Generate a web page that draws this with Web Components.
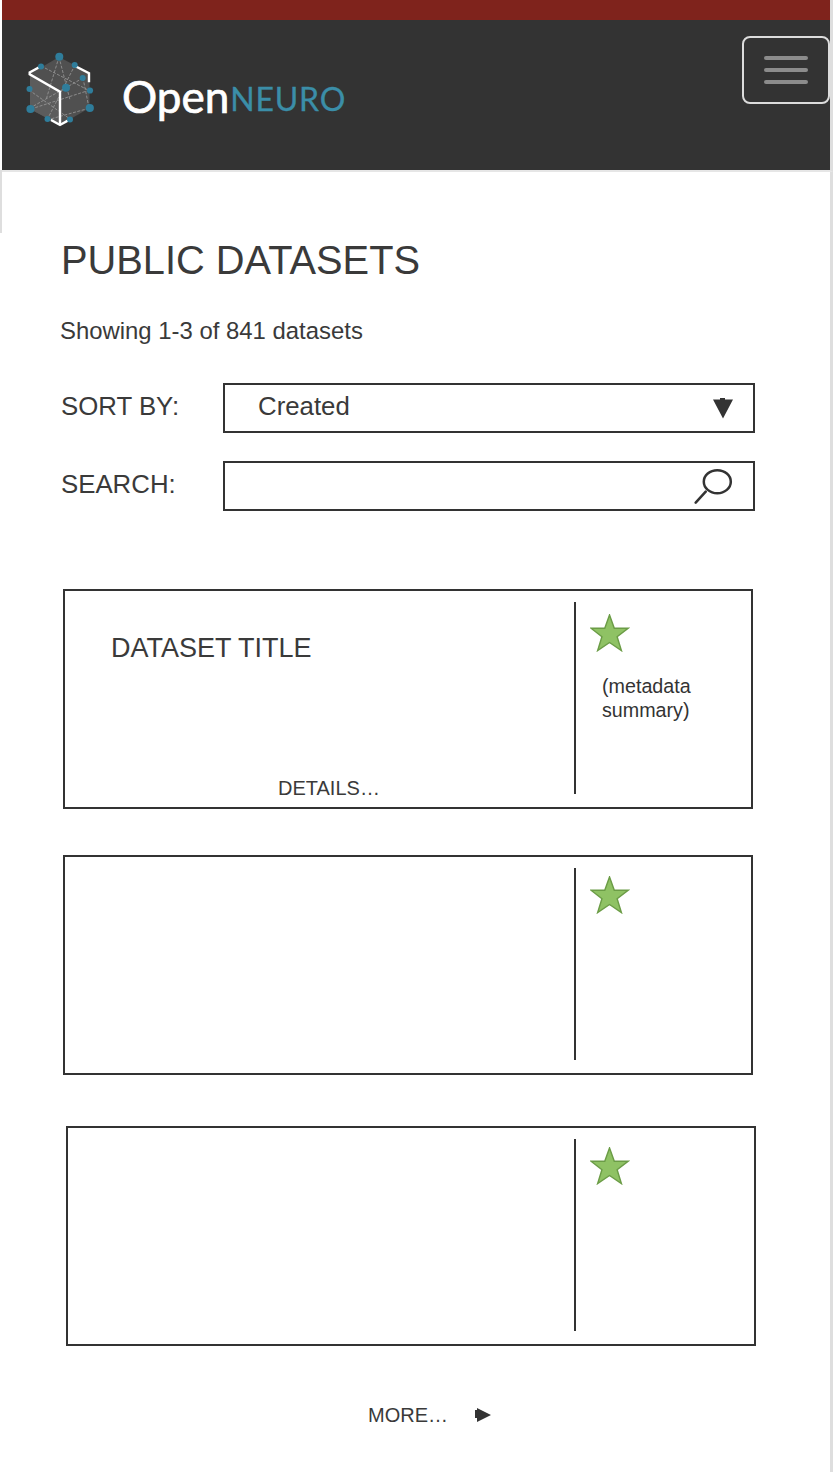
<!DOCTYPE html>
<html lang="en">
<head>
<meta charset="utf-8">
<title>OpenNeuro - Public Datasets</title>
<style>
    html, body { margin: 0; padding: 0; background: #fff; }
    body { font-family: "Liberation Sans", Arial, sans-serif; color: #333; }
</style>
</head>
<body>

<app-header></app-header>
<dataset-page>
    <section-title>PUBLIC DATASETS</section-title>
    <result-count>Showing 1-3 of 841 datasets</result-count>
    <form-row label="SORT BY:" value="Created" icon="caret" class="sort"></form-row>
    <form-row label="SEARCH:" icon="search" class="search"></form-row>
    <dataset-card class="first" title-text="DATASET TITLE" details="DETAILS…">(metadata<br>summary)</dataset-card>
    <dataset-card class="second"></dataset-card>
    <dataset-card class="third"></dataset-card>
    <more-link>MORE…</more-link>
</dataset-page>

<script>
const headerTemplate = document.createElement('template');
headerTemplate.innerHTML = `
    <style>
        :host { display: block; width: 834px; }
        .alert { height: 20px; margin-left: 2px; margin-right: 1px; border-right: 3px solid #dedede; background: #7f231c; }
        .bar {
            display: flex;
            align-items: flex-start;
            justify-content: space-between;
            height: 150px;
            margin-left: 2px;
            margin-right: 1px;
            background: #333;
            border-bottom: 2px solid #e6e6e6;
            border-right: 3px solid #dedede;
        }
        .brand { display: flex; align-items: flex-start; padding: 30px 0 0 23px; }
        .brand svg { display: block; width: 72px; height: 80px; flex: none; }
        .name {
            margin: 20px 0 0 25px;
            font-family: Lato, sans-serif;
            font-size: 44px;
            line-height: 52px;
            color: #fff;
            white-space: nowrap;
            -webkit-text-stroke: 0.7px #fff;
        }
        .name span {
            font-size: 32px;
            color: #3b8ea8;
            letter-spacing: 0.8px;
            margin-left: 1px;
            vertical-align: 2px;
            -webkit-text-stroke: 0.3px #3b8ea8;
        }
        button {
            box-sizing: border-box;
            width: 88px;
            height: 68px;
            margin: 16px 0 0 0;
            padding: 0;
            display: flex;
            flex-direction: column;
            align-items: center;
            justify-content: center;
            gap: 8px;
            background: transparent;
            border: 2px solid #dcdcdc;
            border-radius: 8px;
        }
        button i { display: block; width: 44px; height: 4px; background: #8c8c8c; border-radius: 2px; }
    </style>
    <div class="alert"></div>
    <div class="bar">
        <div class="brand">
            <svg viewBox="25 50 72 80" aria-hidden="true">
                <polygon points="59,57 89.500,73 89.500,108 60,125 30,109 30,74" fill="#505050"/>
                <polygon points="30,74 60,91 60,125 30,109" fill="#5c5c5c"/>
                <g fill="none" stroke="#9a9a9a" stroke-width="0.800" stroke-dasharray="3 1.500">
                    <path d="M59,57 L46,100 M59,57 L70,100 M41,66 L90,91 M75,65 L47,120 M83,78 L30,108 M29,90 L70,119 M31,109 L90,90 M47,120 L90,108 M83,78 L89,108"/>
                </g>
                <g fill="none" stroke="#fff" stroke-width="2.400" stroke-linecap="square" stroke-linejoin="miter">
                    <path d="M38,68 L29.700,72.500 L29.700,74.300 L60,91.700 L60,123"/>
                    <path d="M52,120.500 L60,125 L69,120"/>
                    <path d="M75,66 L89,73.300 L89,81"/>
                </g>
                <g fill="#2f7d9b">
                    <circle cx="59.300" cy="56.700" r="4"/>
                    <circle cx="41" cy="66.500" r="3"/>
                    <circle cx="74.700" cy="65" r="3"/>
                    <circle cx="82.700" cy="78" r="3"/>
                    <circle cx="66" cy="87.700" r="4"/>
                    <circle cx="29.500" cy="89" r="3"/>
                    <circle cx="90" cy="90.500" r="3.100"/>
                    <circle cx="30.500" cy="109" r="4.100"/>
                    <circle cx="89.800" cy="108" r="4.100"/>
                    <circle cx="47.500" cy="119" r="3"/>
                    <circle cx="70" cy="119.500" r="3"/>
                </g>
            </svg>
            <div class="name">Open<span>NEURO</span></div>
        </div>
        <button type="button" aria-label="Menu"><i></i><i></i><i></i></button>
    </div>
`;

class AppHeader extends HTMLElement {
    constructor() {
        super();
        this.attachShadow({mode: 'open'});
        this.shadowRoot.appendChild(headerTemplate.content.cloneNode(true));
    }
}

const pageTemplate = document.createElement('template');
pageTemplate.innerHTML = `
    <style>
        :host {
            display: block;
            box-sizing: border-box;
            width: 834px;
            background: #fff;
        }
        .wrap {
            display: flow-root;
            box-sizing: border-box;
            border-right: 3px solid #dedede;
            margin-right: 1px;
            height: 1300px;
            padding-top: 1px;
        }
        .stub { position: absolute; left: 0; top: 170px; width: 2px; height: 63px; background: #dedede; }
    </style>
    <div class="stub"></div>
    <div class="wrap"><slot></slot></div>
`;

class DatasetPage extends HTMLElement {
    constructor() {
        super();
        this.attachShadow({mode: 'open'});
        this.shadowRoot.appendChild(pageTemplate.content.cloneNode(true));
    }
}

class SectionTitle extends HTMLElement {
    constructor() {
        super();
        this.attachShadow({mode: 'open'});
        this.shadowRoot.innerHTML = `
            <style>
                :host {
                    display: block;
                    margin: 63px 0 0 61px;
                    font-size: 39.800px;
                    line-height: 48px;
                    color: #3a3a3a;
                }
            </style>
            <slot></slot>`;
    }
}

class ResultCount extends HTMLElement {
    constructor() {
        super();
        this.attachShadow({mode: 'open'});
        this.shadowRoot.innerHTML = `
            <style>
                :host {
                    display: block;
                    margin: 32px 0 0 60px;
                    font-size: 23.900px;
                    line-height: 30px;
                    color: #3a3a3a;
                }
            </style>
            <slot></slot>`;
    }
}

const icons = {
    caret: `<svg width="22" height="22" viewBox="0 0 22 22"><path d="M1,2.500 H8 V1 H13 V2.500 H21 L11,21.500 Z" fill="#333"/></svg>`,
    search: `<svg width="40" height="40" viewBox="0 0 40 40"><ellipse cx="23.300" cy="15.700" rx="13.500" ry="11.500" fill="none" stroke="#333" stroke-width="2.500"/><path d="M11.700,25.700 L1.700,36.700" stroke="#333" stroke-width="2.500" stroke-linecap="round"/></svg>`
};

class FormRow extends HTMLElement {
    constructor() {
        super();
        this.attachShadow({mode: 'open'});
    }

    connectedCallback() {
        const label = this.getAttribute('label') || '';
        const value = this.getAttribute('value') || '';
        const icon = icons[this.getAttribute('icon')] || '';
        this.shadowRoot.innerHTML = `
            <style>
                :host {
                    display: flex;
                    align-items: center;
                    height: 50px;
                    margin: 28px 0 0 60px;
                    color: #3a3a3a;
                }
                :host(.sort) { margin-top: 37px; }
                .label { width: 163px; flex: none; font-size: 25.800px; padding: 0 0 4px 1px; box-sizing: border-box; }
                .field {
                    box-sizing: border-box;
                    display: flex;
                    align-items: center;
                    justify-content: space-between;
                    width: 532px;
                    height: 50px;
                    padding: 0 19px 0 33px;
                    border: 2px solid #333;
                    font-size: 25.800px;
                }
                .field span { padding-bottom: 4px; }
                .field svg { display: block; }
            </style>
            <span class="label">${label}</span>
            <div class="field"><span>${value}</span>${icon}</div>`;
    }
}

class DatasetCard extends HTMLElement {
    constructor() {
        super();
        this.attachShadow({mode: 'open'});
    }

    connectedCallback() {
        const title = this.getAttribute('title-text') || '';
        const details = this.getAttribute('details') || '';
        this.shadowRoot.innerHTML = `
            <style>
                :host {
                    display: block;
                    box-sizing: border-box;
                    width: 690px;
                    height: 220px;
                    margin: 46px 0 0 63px;
                    border: 2px solid #333;
                }
                :host(.first) { margin-top: 78px; }
                :host(.third) { margin: 51px 0 0 66px; }
                .inner { display: flex; height: 100%; padding: 11px 0 13px; box-sizing: border-box; }
                :host(.third) .inner { margin-left: -3px; }
                .main { position: relative; box-sizing: border-box; width: 509px; flex: none; padding: 29px 0 0 46px; }
                .title { font-size: 27px; line-height: 34px; color: #3a3a3a; }
                .details {
                    position: absolute;
                    left: 213px;
                    bottom: -6px;
                    font-size: 20px;
                    line-height: 24px;
                    color: #3a3a3a;
                }
                .side { flex: 1; border-left: 2px solid #333; padding: 8px 0 0 14px; }
                :host(.first) .side { padding-top: 12px; }
                .side svg { display: block; }
                .summary {
                    margin: 22px 0 0 12px;
                    font-size: 19.700px;
                    line-height: 24px;
                    color: #333;
                }
            </style>
            <div class="inner">
                <div class="main">
                    <div class="title">${title}</div>
                    ${details ? `<div class="details">${details}</div>` : ''}
                </div>
                <div class="side">
                    <svg width="40" height="38" viewBox="0 0 42 40">
                        <polygon points="20.500,1 25.500,15 40,15 28.500,24 33,38.500 20.500,30 8,38.500 12.500,24 1,15 15.500,15"
                            fill="#8fc264" stroke="#6b9c46" stroke-width="1.500"/>
                    </svg>
                    <div class="summary"><slot></slot></div>
                </div>
            </div>`;
    }
}

class MoreLink extends HTMLElement {
    constructor() {
        super();
        this.attachShadow({mode: 'open'});
        this.shadowRoot.innerHTML = `
            <style>
                :host {
                    display: flex;
                    align-items: center;
                    height: 30px;
                    margin: 54px 0 0 368px;
                    font-size: 20px;
                    color: #3a3a3a;
                }
                svg { display: block; margin-left: 26px; }
            </style>
            <slot></slot>
            <svg width="18" height="16" viewBox="0 0 18 16"><path d="M1,3 H3 V1 L17,8 L3,15 V11 H1 Z" fill="#333"/></svg>`;
    }
}

customElements.define('app-header', AppHeader);
customElements.define('dataset-page', DatasetPage);
customElements.define('section-title', SectionTitle);
customElements.define('result-count', ResultCount);
customElements.define('form-row', FormRow);
customElements.define('dataset-card', DatasetCard);
customElements.define('more-link', MoreLink);
</script>
</body>
</html>
